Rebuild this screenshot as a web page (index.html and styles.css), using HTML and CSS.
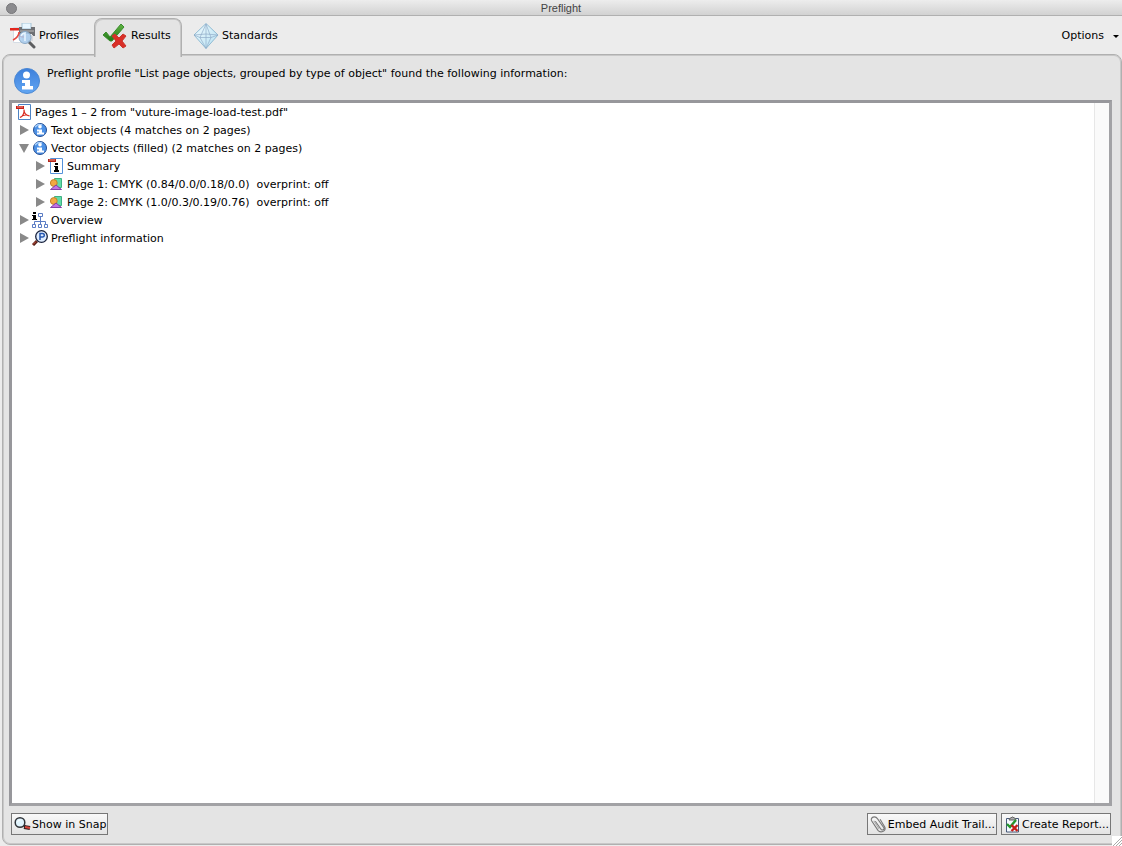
FILE: index.html
```
<!DOCTYPE html>
<html lang="en">
<head>
<meta charset="utf-8">
<title>Preflight</title>
<link rel="stylesheet" href="styles.css">
</head>
<body>
<svg class="defs" aria-hidden="true">
  <defs>
    <linearGradient id="blue" x1="0" y1="0" x2="0" y2="1"><stop offset="0" stop-color="#3d7fdb"/><stop offset="1" stop-color="#62a6f2"/></linearGradient>
    <linearGradient id="green" x1="0" y1="0" x2="0" y2="1"><stop offset="0" stop-color="#62b544"/><stop offset="1" stop-color="#207818"/></linearGradient>
    <linearGradient id="glass" x1="0" y1="0" x2="1" y2="1"><stop offset="0" stop-color="#f2fbfe"/><stop offset="1" stop-color="#b4e0f2"/></linearGradient>
  </defs>
  <symbol id="info" viewBox="0 0 28 28">
    <circle cx="14" cy="14" r="12.500" fill="url(#blue)" stroke="#4a88d4"/>
    <circle cx="13.500" cy="8" r="3.500" fill="#fff"/>
    <path d="M9 13h8v6h3v3.500H9V19h3v-3H9z" fill="#fff"/>
  </symbol>
  <symbol id="info-small" viewBox="0 0 16 16">
    <circle cx="8" cy="8" r="6.500" fill="#4c91e6" stroke="#244e93"/>
    <path d="M3 5a6 6 0 0 1 7-2" fill="none" stroke="#a7d0fc" stroke-width="1.500"/>
    <circle cx="8" cy="4.800" r="1.800" fill="#fff"/>
    <path d="M5 7.500h5v3h2v2H5v-2h2v-1H5z" fill="#fff"/>
  </symbol>
  <symbol id="arrow" viewBox="0 0 16 18"><path d="M4 4v10l9-5z" fill="#898989"/></symbol>
  <symbol id="arrow-down" viewBox="0 0 16 18"><path d="M3 5h10l-5 9z" fill="#898989"/></symbol>
  <symbol id="pdf" viewBox="0 0 16 16">
    <path d="M2.500.5h12v15h-12z" fill="#fff" stroke="#4d83c4"/>
    <path d="M0 2h8v3H0z" fill="#c81d14"/><path d="M1 3h6" stroke="#f0968c"/>
    <path d="M4 13.500c3-1 4.500-5 4-8 0 4 2 6 5.500 6.500C10 10 7 11 4 13.500" fill="none" stroke="#d92a1e" stroke-width="1.200"/>
  </symbol>
  <symbol id="summary" viewBox="0 0 16 16">
    <path d="M2.500.5h12v15h-12z" fill="#fff" stroke="#5592da"/>
    <path d="M0 1h8v3H0z" fill="#b3261b"/><path d="M1 2h6" stroke="#e88e84"/>
    <path d="M7 5h3v2H7zM6 8h4v4h1v2H6v-2h1V9H6z" fill="#000"/>
  </symbol>
  <symbol id="shapes" viewBox="0 0 16 16">
    <path d="M6.500 2.500h7v9h-7z" fill="#62dba8" stroke="#3fb183"/>
    <circle cx="5.800" cy="7" r="3.400" fill="#f3a843" stroke="#c08228"/>
    <path d="M2.500 13.500L8 9l5.500 4.500z" fill="#c172e4" stroke="#8240a8"/>
  </symbol>
  <symbol id="overview" viewBox="0 0 16 16">
    <path d="M1 0h3v2H1zM0 3h4v4h1v1H0V7h1V4H0z" fill="#000"/>
    <path d="M8.500 5v7M2.500 12V9.500h11V12M6.500 1.500h4v3h-4zM.5 12.500h3v3h-3zM6.500 12.500h3v3h-3zM12.500 12.500h3v3h-3z" fill="none" stroke="#5a7cc4"/>
  </symbol>
  <symbol id="snap" viewBox="0 0 17 17">
    <path d="M9 9l3 2" stroke="#222" stroke-width="2"/><path d="M10 11l6 1" stroke="#33201f" stroke-width="4"/><path d="M11 11l5 1" stroke="#d8453c" stroke-width="2"/>
    <circle cx="6" cy="6.500" r="4.800" fill="#e0f4fd" stroke="#303439" stroke-width="1.500"/><path d="M3.500 6a3 3 0 0 1 3-2" fill="none" stroke="#fff"/>
  </symbol>
  <symbol id="clip" viewBox="0 0 16 16">
    <g fill="none" stroke="#777"><path d="M5 5l5 7c1 2 4 1 3-1L7 2.500C5-.5 0 1 1.500 4.500l6 9c2 2.500 8 1.500 6.500-3L9.500 3"/><path d="M3.500 4.500l5 7.500" stroke="#aaa"/></g>
  </symbol>
  <symbol id="report" viewBox="0 0 17 17">
    <path d="M2.500 2.500h12v13.500h-12z" fill="#f5f9ff" stroke="#465978"/><path d="M5 4l1-2h1l1-1h1l1 1h1l1 2z" fill="#aaa" stroke="#666"/>
    <path d="M3 8l3 3 6-7" fill="none" stroke="#22962b" stroke-width="2.400"/><path d="M7.500 9l6 6m0-6l-6 6" stroke="#c51f1a" stroke-width="2.400"/>
  </symbol>
  <symbol id="profiles" viewBox="0 0 26 26">
    <path d="M3.500 4.500h9v15h-9z" fill="#fff" stroke="#d5dde5"/>
    <path d="M12 0h9v6h-9z" fill="#e8f6ff" stroke="#a5c3d6"/><path d="M9 4h3v2h9V4h4v9h-3v-2H10v2H9z" fill="#6e7074"/><path d="M10 8h14" stroke="#bbb"/><path d="M12 12h11v6H12z" fill="#d8dade"/>
    <path d="M0 5h9v2.500H0z" fill="#e3261c"/><path d="M3 17c4-2 6-5 6-8 0 4 2 5 5 5" fill="none" stroke="#e44b43" stroke-width="1.600"/>
    <path d="M19 19l5 5" stroke="#5c5e60" stroke-width="3" stroke-linecap="round"/>
    <circle cx="15" cy="14.500" r="6" fill="#a9cdee" fill-opacity=".85" stroke="#88a8c6"/><path d="M11 13a5 5 0 0 1 5-3M15 11v7" fill="none" stroke="#e9f6ff" stroke-width="1.500"/>
  </symbol>
  <symbol id="results" viewBox="0 0 26 26">
    <path d="M1 12l3-3 4 5L19 1l3 3L10 18H8z" fill="url(#green)" stroke="#3a8d2c" stroke-linejoin="round"/>
    <path d="M10 13l3-2 4 4 4-4 3 2-4 5 4 5-3 2-4-4-5 4-2-3 4-4z" fill="#d92f27" stroke="#c9352d" stroke-linejoin="round"/>
  </symbol>
  <symbol id="standards" viewBox="0 0 26 26">
    <path d="M13 .5L25 12 13 25.500 1 12z" fill="url(#glass)" stroke="#8fbad2"/>
    <path d="M1 12l6 2.500h11l7-2.500M13 1L7 14.500l6 11 5-11zM1 12l12-1 12 1M13 1v24" fill="none" stroke="#90acc8" stroke-width=".7"/>
  </symbol>
</svg>

<div class="window">
  <header class="titlebar">
    <button class="close" type="button" aria-label="Close"></button>
    <h1 class="title">Preflight</h1>
  </header>
  <nav class="toolbar">
    <div class="tabs" role="tablist">
      <button class="tab" type="button" role="tab" aria-selected="false"><svg class="tab-icon"><use href="#profiles"/></svg>Profiles</button>
      <button class="tab tab-active" type="button" role="tab" aria-selected="true"><svg class="tab-icon"><use href="#results"/></svg>Results</button>
      <button class="tab" type="button" role="tab" aria-selected="false"><svg class="tab-icon"><use href="#standards"/></svg>Standards</button>
    </div>
    <button class="options" type="button">Options<span class="caret"></span></button>
  </nav>
  <main class="panel">
    <div class="message">
      <svg class="message-icon"><use href="#info"/></svg>
      <p class="message-text">Preflight profile "List page objects, grouped by type of object" found the following information:</p>
    </div>
    <div class="results">
      <ul class="tree">
        <li>
          <div class="row"><svg class="icon"><use href="#pdf"/></svg><span class="label">Pages 1 – 2 from "vuture-image-load-test.pdf"</span></div>
          <ul class="branch">
            <li><div class="row"><button class="toggle" type="button" aria-label="Expand Text objects"><svg class="arrow"><use href="#arrow"/></svg></button><svg class="icon"><use href="#info-small"/></svg><span class="label">Text objects (4 matches on 2 pages)</span></div></li>
            <li><div class="row"><button class="toggle" type="button" aria-label="Collapse Vector objects"><svg class="arrow"><use href="#arrow-down"/></svg></button><svg class="icon"><use href="#info-small"/></svg><span class="label">Vector objects (filled) (2 matches on 2 pages)</span></div>
              <ul class="branch branch-nested">
                <li><div class="row"><button class="toggle" type="button" aria-label="Expand Summary"><svg class="arrow"><use href="#arrow"/></svg></button><svg class="icon"><use href="#summary"/></svg><span class="label">Summary</span></div></li>
                <li><div class="row"><button class="toggle" type="button" aria-label="Expand Page 1"><svg class="arrow"><use href="#arrow"/></svg></button><svg class="icon"><use href="#shapes"/></svg><span class="label">Page 1: CMYK (0.84/0.0/0.18/0.0)&nbsp; overprint: off</span></div></li>
                <li><div class="row"><button class="toggle" type="button" aria-label="Expand Page 2"><svg class="arrow"><use href="#arrow"/></svg></button><svg class="icon"><use href="#shapes"/></svg><span class="label">Page 2: CMYK (1.0/0.3/0.19/0.76)&nbsp; overprint: off</span></div></li>
              </ul>
            </li>
            <li><div class="row"><button class="toggle" type="button" aria-label="Expand Overview"><svg class="arrow"><use href="#arrow"/></svg></button><svg class="icon"><use href="#overview"/></svg><span class="label">Overview</span></div></li>
            <li><div class="row"><button class="toggle" type="button" aria-label="Expand Preflight information"><svg class="arrow"><use href="#arrow"/></svg></button><svg class="icon" viewBox="0 0 16 16"><path d="M5 11L1 15" stroke="#541c14" stroke-width="3"/><path d="M4 11.500L1 14.500" stroke="#d55a47"/><circle cx="9.500" cy="6.500" r="5.800" fill="#dfedff" stroke="#17213c" stroke-width="1.300"/><path d="M8 10V3.500h2.500a1.800 1.800 0 0 1 0 3.600H8" fill="none" stroke="#2456b0" stroke-width="1.500"/></svg><span class="label">Preflight information</span></div></li>
          </ul>
        </li>
      </ul>
      <div class="scroll-track"></div>
    </div>
    <footer class="actions">
      <button class="action" type="button"><svg class="action-icon"><use href="#snap"/></svg><span class="label">Show in Snap</span></button>
      <div class="action-group">
        <button class="action" type="button"><svg class="action-icon"><use href="#clip"/></svg><span class="label">Embed Audit Trail...</span></button>
        <button class="action" type="button"><svg class="action-icon"><use href="#report"/></svg><span class="label">Create Report...</span></button>
      </div>
    </footer>
  </main>
  <svg class="grip" viewBox="0 0 10 10"><path d="M0 0h10v10H0z" fill="#fff"/><path d="M1 10l9-9M4 10l6-6M7 10l3-3" stroke="#aaa"/></svg>
</div>
</body>
</html>
```
FILE: styles.css
```
* { box-sizing: border-box; }
body {
  margin: 0;
  font: 11px/18px "DejaVu Sans", sans-serif;
  color: #000;
}
button {
  margin: 0;
  padding: 0;
  border: 0;
  background: none;
  font: inherit;
  color: inherit;
}
ul { margin: 0; padding: 0; list-style: none; }
svg { flex: none; display: block; }
.defs { position: absolute; width: 0; height: 0; }

.window {
  position: relative;
  display: flex;
  flex-direction: column;
  min-height: 100vh;
  padding-bottom: 1px;
  background: #ececec;
}
.titlebar {
  display: grid;
  grid-template-columns: 1fr auto 1fr;
  align-items: center;
  height: 16px;
  padding: 0 6px;
  border-bottom: 1px solid #b0b0b0;
  background: linear-gradient(#ededed, #d2d2d2);
}
.close {
  width: 11px;
  height: 11px;
  border: 1px solid #77777a;
  border-radius: 50%;
  background: #8b8b8e;
}
.title {
  margin: 0;
  font: 11px/16px "Liberation Sans", sans-serif;
  color: #444;
}

.toolbar {
  display: flex;
  justify-content: space-between;
  padding: 2px 3px 0 2px;
}
.tabs { display: flex; }
.tab {
  display: flex;
  align-items: center;
  gap: 3px;
  width: 92px;
  height: 35px;
  padding: 0 0 0 8px;
}
.tab-active {
  position: relative;
  z-index: 1;
  width: 88px;
  height: 39px;
  margin-bottom: -3px;
  padding: 0 0 4px 7px;
  border: 1px solid #b0b0b0;
  border-bottom: 0;
  border-radius: 8px 8px 0 0;
  background: #e4e4e4;
  box-shadow: inset 1px 1px #c8c8c8, inset -1px 0 #c8c8c8;
}
.tab-active + .tab { padding-left: 11px; }
.tab-icon { width: 26px; height: 26px; }
.options { display: flex; align-items: center; gap: 9px; height: 36px; }
.caret {
  border: 3px solid transparent;
  border-top: 3px solid #000;
  border-bottom: 0;
}

.panel {
  flex: 1;
  display: flex;
  flex-direction: column;
  margin-left: 2px;
  padding: 10px 9px 8px 6px;
  border: 1px solid #b0b0b0;
  border-radius: 8px;
  background: #e4e4e4;
  box-shadow: inset 0 0 0 1px #c8c8c8;
}
.message { display: flex; gap: 6px; height: 35px; padding-left: 4px; }
.message-icon { width: 28px; height: 28px; margin-top: 2px; }
.message-text { margin: 0; }
.results {
  flex: 1;
  display: flex;
  justify-content: space-between;
  border: 3px solid #a2a2a5;
  border-color: #97979b #a2a2a5 #a2a2a5 #97979b;
  background: #fff;
}
.tree { padding-left: 4px; }
.branch-nested { padding-left: 16px; }
.row { display: flex; align-items: center; height: 18px; white-space: nowrap; }
.label { padding-top: 2px; }
.toggle, .arrow { width: 16px; height: 18px; }
.icon { width: 16px; height: 16px; margin-right: 3px; }
.scroll-track { width: 15px; border-left: 1px solid #e7e7e7; background: #fafafa; }

.actions { display: flex; justify-content: space-between; padding: 7px 1px 1px 2px; }
.action-group { display: flex; gap: 4px; }
.action {
  display: flex;
  align-items: center;
  gap: 1px;
  height: 22px;
  padding: 0 1px 0 2px;
  border: 1px solid #777;
  background: linear-gradient(#f9f9f9, #e3e3e3);
}
.action-icon { width: 17px; height: 17px; }
.grip { position: absolute; right: 0; bottom: 0; z-index: 1; width: 10px; height: 10px; }
```
